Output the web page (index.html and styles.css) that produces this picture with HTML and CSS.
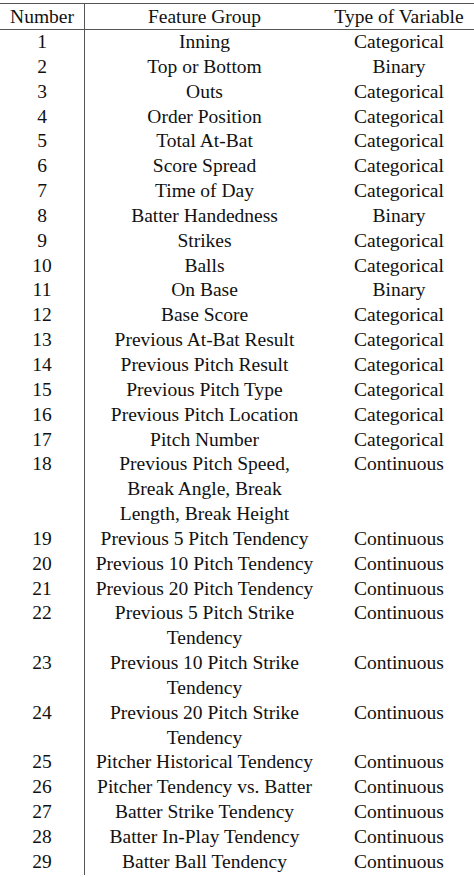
FILE: index.html
```html
<!DOCTYPE html>
<html>
<head>
<meta charset="utf-8">
<link rel="stylesheet" href="styles.css">
</head>
<body>
<div class="sheet">
<table class="features">
<thead>
<tr><th class="num">Number</th><th class="group">Feature Group</th><th class="type">Type of Variable</th></tr>
</thead>
<tbody>
<tr><td class="num">1</td><td>Inning</td><td>Categorical</td></tr>
<tr><td class="num">2</td><td>Top or Bottom</td><td>Binary</td></tr>
<tr><td class="num">3</td><td>Outs</td><td>Categorical</td></tr>
<tr><td class="num">4</td><td>Order Position</td><td>Categorical</td></tr>
<tr><td class="num">5</td><td>Total At-Bat</td><td>Categorical</td></tr>
<tr><td class="num">6</td><td>Score Spread</td><td>Categorical</td></tr>
<tr><td class="num">7</td><td>Time of Day</td><td>Categorical</td></tr>
<tr><td class="num">8</td><td>Batter Handedness</td><td>Binary</td></tr>
<tr><td class="num">9</td><td>Strikes</td><td>Categorical</td></tr>
<tr><td class="num">10</td><td>Balls</td><td>Categorical</td></tr>
<tr><td class="num">11</td><td>On Base</td><td>Binary</td></tr>
<tr><td class="num">12</td><td>Base Score</td><td>Categorical</td></tr>
<tr><td class="num">13</td><td>Previous At-Bat Result</td><td>Categorical</td></tr>
<tr><td class="num">14</td><td>Previous Pitch Result</td><td>Categorical</td></tr>
<tr><td class="num">15</td><td>Previous Pitch Type</td><td>Categorical</td></tr>
<tr><td class="num">16</td><td>Previous Pitch Location</td><td>Categorical</td></tr>
<tr><td class="num">17</td><td>Pitch Number</td><td>Categorical</td></tr>
<tr><td class="num">18</td><td>Previous Pitch Speed,<br>Break Angle, Break<br>Length, Break Height</td><td>Continuous</td></tr>
<tr><td class="num">19</td><td>Previous 5 Pitch Tendency</td><td>Continuous</td></tr>
<tr><td class="num">20</td><td>Previous 10 Pitch Tendency</td><td>Continuous</td></tr>
<tr><td class="num">21</td><td>Previous 20 Pitch Tendency</td><td>Continuous</td></tr>
<tr><td class="num">22</td><td>Previous 5 Pitch Strike<br>Tendency</td><td>Continuous</td></tr>
<tr><td class="num">23</td><td>Previous 10 Pitch Strike<br>Tendency</td><td>Continuous</td></tr>
<tr><td class="num">24</td><td>Previous 20 Pitch Strike<br>Tendency</td><td>Continuous</td></tr>
<tr><td class="num">25</td><td>Pitcher Historical Tendency</td><td>Continuous</td></tr>
<tr><td class="num">26</td><td>Pitcher Tendency vs. Batter</td><td>Continuous</td></tr>
<tr><td class="num">27</td><td>Batter Strike Tendency</td><td>Continuous</td></tr>
<tr><td class="num">28</td><td>Batter In-Play Tendency</td><td>Continuous</td></tr>
<tr><td class="num">29</td><td>Batter Ball Tendency</td><td>Continuous</td></tr>
</tbody>
</table>
</div>
</body>
</html>
```

FILE: styles.css
```css
html, body {
  margin: 0;
  padding: 0;
  background: #ffffff;
}

.sheet {
  padding-top: 3px;
  overflow: hidden;
}

.features {
  width: 474px;
  border-collapse: collapse;
  table-layout: fixed;
  font-family: "Liberation Serif", "Times New Roman", serif;
  font-size: 19.5px;
  line-height: 24.85px;
  color: #111111;
}

.features th,
.features td {
  padding: 0;
  text-align: center;
  vertical-align: top;
  font-weight: normal;
  white-space: nowrap;
}

.features thead th {
  border-top: 1px solid #555555;
  border-bottom: 1px solid #555555;
  height: 25px;
  line-height: 25px;
  vertical-align: middle;
}

.features .num {
  width: 84px;
  border-right: 1px solid #555555;
}

.features .group {
  width: 239px;
}

.features .type {
  width: 150px;
}
```
